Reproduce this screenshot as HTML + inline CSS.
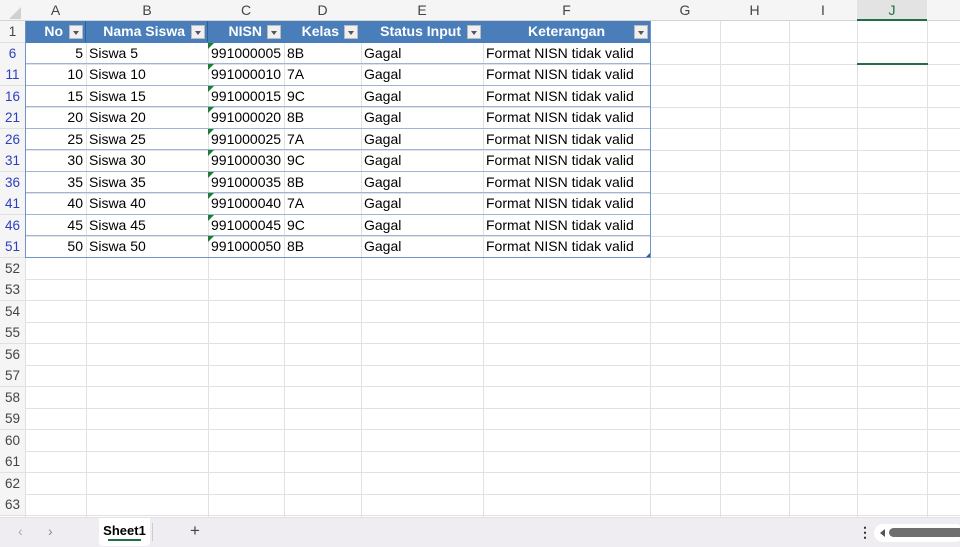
<!DOCTYPE html>
<html><head><meta charset="utf-8"><style>
*{margin:0;padding:0;box-sizing:border-box}
body{width:960px;height:547px;overflow:hidden;background:#fff;font-family:"Liberation Sans",Arial,sans-serif;font-size:14px;color:#000;position:relative}
.a{position:absolute}
.vl{position:absolute;top:0;width:1px;height:517px;background:#e1e1e1}
.hl{position:absolute;left:0;width:960px;height:1px;background:#e1e1e1}
.ch{position:absolute;top:0;height:21px;background:#f5f5f5;border-bottom:1px solid #d4d4d4;text-align:center;line-height:20px;color:#444;font-size:14px}
.rh{position:absolute;left:0;width:25px;background:#f5f5f5;text-align:center;color:#444;font-size:13.5px;line-height:21px}
.rh.b{color:#2b3fbf}
.row{position:absolute;left:25px;width:626px;height:21.5px;border-bottom:1px solid #9db5da}
.c{position:absolute;top:0;height:21px;line-height:21px;white-space:nowrap;overflow:hidden;padding:0 3px}
.hd{position:absolute;left:25px;top:21px;width:626px;height:21.5px;background:#4a7ebb;color:#fff;font-weight:bold}
.hd .c{text-align:right;padding-right:22px}
.fb{position:absolute;top:4px;width:14px;height:14px;background:#f0f0f0;border:1px solid #bbb}
.fb:after{content:"";position:absolute;left:3px;top:5px;border-left:3.5px solid transparent;border-right:3.5px solid transparent;border-top:4px solid #555}
.tri{position:absolute;left:183px;top:0;width:0;height:0;border-top:6px solid #1e7b34;border-right:6px solid transparent}
</style></head><body>
<div class="vl" style="left:25px"></div><div class="vl" style="left:86px"></div><div class="vl" style="left:208px"></div><div class="vl" style="left:284px"></div><div class="vl" style="left:361px"></div><div class="vl" style="left:483px"></div><div class="vl" style="left:650px"></div><div class="vl" style="left:720px"></div><div class="vl" style="left:789px"></div><div class="vl" style="left:857px"></div><div class="vl" style="left:927px"></div>
<div class="hl" style="top:42px"></div><div class="hl" style="top:64px"></div><div class="hl" style="top:85px"></div><div class="hl" style="top:107px"></div><div class="hl" style="top:128px"></div><div class="hl" style="top:150px"></div><div class="hl" style="top:171px"></div><div class="hl" style="top:193px"></div><div class="hl" style="top:214px"></div><div class="hl" style="top:236px"></div><div class="hl" style="top:257px"></div><div class="hl" style="top:279px"></div><div class="hl" style="top:300px"></div><div class="hl" style="top:322px"></div><div class="hl" style="top:343px"></div><div class="hl" style="top:365px"></div><div class="hl" style="top:386px"></div><div class="hl" style="top:408px"></div><div class="hl" style="top:429px"></div><div class="hl" style="top:451px"></div><div class="hl" style="top:472px"></div><div class="hl" style="top:494px"></div><div class="hl" style="top:515px"></div>
<div class="ch" style="left:0;width:25px"></div>
<div class="a" style="left:9px;top:7px;border-left:12px solid transparent;border-bottom:12px solid #d0d0d0"></div>
<div class="ch" style="left:25px;width:61px">A</div><div class="ch" style="left:86px;width:122px">B</div><div class="ch" style="left:208px;width:76px">C</div><div class="ch" style="left:284px;width:77px">D</div><div class="ch" style="left:361px;width:122px">E</div><div class="ch" style="left:483px;width:167px">F</div><div class="ch" style="left:650px;width:70px">G</div><div class="ch" style="left:720px;width:69px">H</div><div class="ch" style="left:789px;width:68px">I</div><div class="ch" style="left:857px;width:70px;background:#e3e3e3;border-bottom:2px solid #1e7145;color:#1e7145">J</div><div class="ch" style="left:927px;width:33px"></div>
<div class="rh" style="top:21px">1</div>
<div class="rh b" style="top:42.5px">6</div><div class="rh b" style="top:64px">11</div><div class="rh b" style="top:85.5px">16</div><div class="rh b" style="top:107px">21</div><div class="rh b" style="top:128.5px">26</div><div class="rh b" style="top:150px">31</div><div class="rh b" style="top:171.5px">36</div><div class="rh b" style="top:193px">41</div><div class="rh b" style="top:214.5px">46</div><div class="rh b" style="top:236px">51</div>
<div class="rh" style="top:257.5px">52</div><div class="rh" style="top:279px">53</div><div class="rh" style="top:300.5px">54</div><div class="rh" style="top:322px">55</div><div class="rh" style="top:343.5px">56</div><div class="rh" style="top:365px">57</div><div class="rh" style="top:386.5px">58</div><div class="rh" style="top:408px">59</div><div class="rh" style="top:429.5px">60</div><div class="rh" style="top:451px">61</div><div class="rh" style="top:472.5px">62</div><div class="rh" style="top:494px">63</div>
<div class="hd">
<div class="c" style="left:0;width:61px;border-right:1px solid #2f5f9a">No</div><div class="fb" style="left:44px"></div>
<div class="c" style="left:61px;width:122px;border-right:1px solid #2f5f9a">Nama Siswa</div><div class="fb" style="left:166px"></div>
<div class="c" style="left:183px;width:76px">NISN</div><div class="fb" style="left:242px"></div>
<div class="c" style="left:259px;width:77px">Kelas</div><div class="fb" style="left:319px"></div>
<div class="c" style="left:336px;width:122px">Status Input</div><div class="fb" style="left:442px"></div>
<div class="c" style="left:458px;width:167px;text-align:center;padding-right:3px">Keterangan</div><div class="fb" style="left:609px"></div>
</div>
<div class="row" style="top:42.5px"><div class="c" style="left:0;width:61px;text-align:right">5</div><div class="c" style="left:61px">Siswa 5</div><div class="tri"></div><div class="c" style="left:183px">991000005</div><div class="c" style="left:259px">8B</div><div class="c" style="left:336px">Gagal</div><div class="c" style="left:458px">Format NISN tidak valid</div></div>
<div class="row" style="top:64px"><div class="c" style="left:0;width:61px;text-align:right">10</div><div class="c" style="left:61px">Siswa 10</div><div class="tri"></div><div class="c" style="left:183px">991000010</div><div class="c" style="left:259px">7A</div><div class="c" style="left:336px">Gagal</div><div class="c" style="left:458px">Format NISN tidak valid</div></div>
<div class="row" style="top:85.5px"><div class="c" style="left:0;width:61px;text-align:right">15</div><div class="c" style="left:61px">Siswa 15</div><div class="tri"></div><div class="c" style="left:183px">991000015</div><div class="c" style="left:259px">9C</div><div class="c" style="left:336px">Gagal</div><div class="c" style="left:458px">Format NISN tidak valid</div></div>
<div class="row" style="top:107px"><div class="c" style="left:0;width:61px;text-align:right">20</div><div class="c" style="left:61px">Siswa 20</div><div class="tri"></div><div class="c" style="left:183px">991000020</div><div class="c" style="left:259px">8B</div><div class="c" style="left:336px">Gagal</div><div class="c" style="left:458px">Format NISN tidak valid</div></div>
<div class="row" style="top:128.5px"><div class="c" style="left:0;width:61px;text-align:right">25</div><div class="c" style="left:61px">Siswa 25</div><div class="tri"></div><div class="c" style="left:183px">991000025</div><div class="c" style="left:259px">7A</div><div class="c" style="left:336px">Gagal</div><div class="c" style="left:458px">Format NISN tidak valid</div></div>
<div class="row" style="top:150px"><div class="c" style="left:0;width:61px;text-align:right">30</div><div class="c" style="left:61px">Siswa 30</div><div class="tri"></div><div class="c" style="left:183px">991000030</div><div class="c" style="left:259px">9C</div><div class="c" style="left:336px">Gagal</div><div class="c" style="left:458px">Format NISN tidak valid</div></div>
<div class="row" style="top:171.5px"><div class="c" style="left:0;width:61px;text-align:right">35</div><div class="c" style="left:61px">Siswa 35</div><div class="tri"></div><div class="c" style="left:183px">991000035</div><div class="c" style="left:259px">8B</div><div class="c" style="left:336px">Gagal</div><div class="c" style="left:458px">Format NISN tidak valid</div></div>
<div class="row" style="top:193px"><div class="c" style="left:0;width:61px;text-align:right">40</div><div class="c" style="left:61px">Siswa 40</div><div class="tri"></div><div class="c" style="left:183px">991000040</div><div class="c" style="left:259px">7A</div><div class="c" style="left:336px">Gagal</div><div class="c" style="left:458px">Format NISN tidak valid</div></div>
<div class="row" style="top:214.5px"><div class="c" style="left:0;width:61px;text-align:right">45</div><div class="c" style="left:61px">Siswa 45</div><div class="tri"></div><div class="c" style="left:183px">991000045</div><div class="c" style="left:259px">9C</div><div class="c" style="left:336px">Gagal</div><div class="c" style="left:458px">Format NISN tidak valid</div></div>
<div class="row" style="top:236px"><div class="c" style="left:0;width:61px;text-align:right">50</div><div class="c" style="left:61px">Siswa 50</div><div class="tri"></div><div class="c" style="left:183px">991000050</div><div class="c" style="left:259px">8B</div><div class="c" style="left:336px">Gagal</div><div class="c" style="left:458px">Format NISN tidak valid</div></div>
<div class="a" style="left:25px;top:21px;width:626px;height:237px;border:1px solid #6f93c6;border-top:none"></div>
<div class="a" style="left:646px;top:253px;border-left:4px solid transparent;border-bottom:4px solid #2f5f9a"></div>
<div class="a" style="left:857px;top:63px;width:71px;height:2px;background:#1e7145"></div>
<div class="a" style="left:0;top:517px;width:960px;height:30px;background:#efedf1;border-top:1px solid #e2e0e4"></div>
<div class="a" style="left:18px;top:523px;color:#aaa;font-size:14px">&#8249;</div>
<div class="a" style="left:48px;top:523px;color:#888;font-size:14px">&#8250;</div>
<div class="a" style="left:99px;top:518px;width:51px;height:28px;background:#fff;border-radius:0 0 4px 4px;text-align:center;font-size:13px;font-weight:bold;line-height:26px">Sheet1</div>
<div class="a" style="left:108px;top:539px;width:33px;height:2px;background:#1e7145"></div>
<div class="a" style="left:152px;top:523px;width:1px;height:18px;background:#ccc"></div>
<div class="a" style="left:190px;top:521px;font-size:17px;color:#444">+</div>
<div class="a" style="left:858px;top:524px;color:#333;font-size:14px;font-weight:bold">&#8942;</div>
<div class="a" style="left:874px;top:524px;width:90px;height:18px;background:#fff;border-radius:9px"></div>
<div class="a" style="left:880px;top:529px;border-right:5px solid #555;border-top:4px solid transparent;border-bottom:4px solid transparent"></div>
<div class="a" style="left:889px;top:528px;width:80px;height:9px;background:#6f6f6f;border-radius:5px"></div>
</body></html>
